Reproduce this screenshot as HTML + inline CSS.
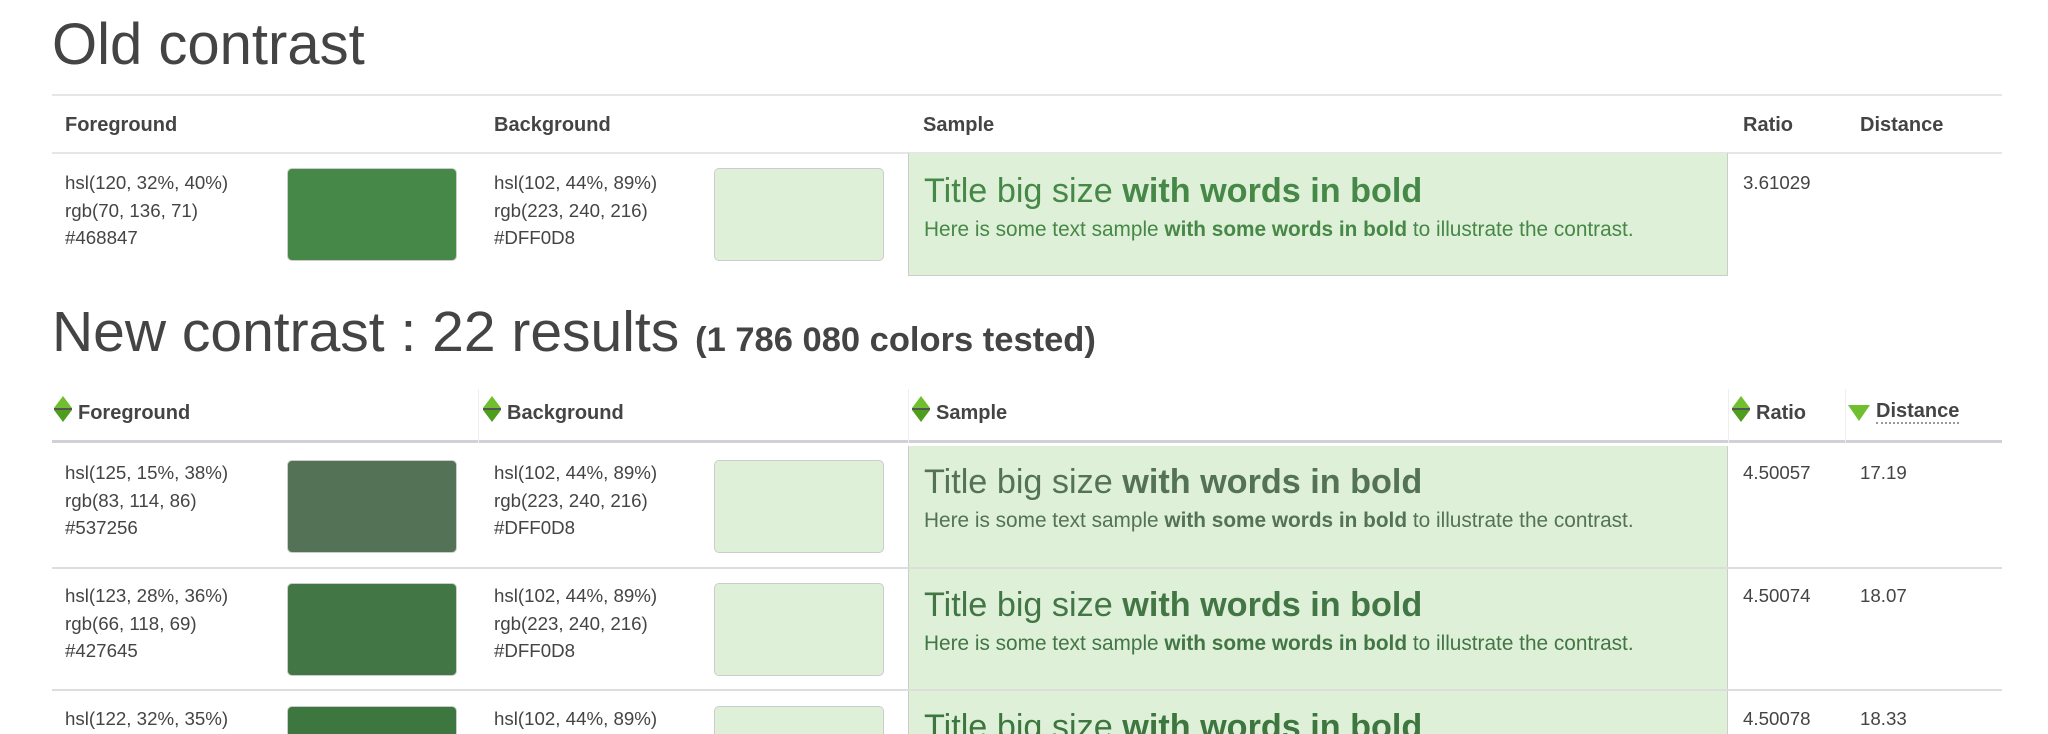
<!DOCTYPE html>
<html><head><meta charset="utf-8"><style>
*{margin:0;padding:0;box-sizing:border-box}
html{width:2048px;height:734px;overflow:hidden}
body{width:2048px;height:734px;overflow:hidden;background:#fff;font-family:"Liberation Sans",sans-serif;color:#444}
#w{position:relative;width:2048px;height:734px;overflow:hidden}
.a{position:absolute;white-space:nowrap}
h1{position:absolute;left:52px;font-size:58px;font-weight:normal;color:#444;white-space:nowrap;line-height:1.15}
.hl{position:absolute;left:52px;width:1950px;height:2px;background:#e6e6e6}
.th{position:absolute;font-size:20px;font-weight:bold;color:#444}
.td{position:absolute;font-size:18.7px;line-height:27.5px;color:#444}
.sw{position:absolute;width:170px;height:93px;border-radius:5px;border:1px solid #ccc}
.sample{position:absolute;left:908px;width:820px;background:#dff0d8;border:1px solid #ccc;border-top:none}
.sample .t{position:absolute;left:15px;top:19px;font-size:34.2px;white-space:nowrap}
.sample .s{position:absolute;left:15px;top:65px;font-size:20.8px;white-space:nowrap}
.ic{display:inline-block;vertical-align:-3px;margin-right:6px}
</style></head><body><div id="w">

<h1 style="top:12px">Old contrast</h1>
<div class="hl" style="top:94px"></div>
<div class="th" style="left:65px;top:114px">Foreground</div>
<div class="th" style="left:494px;top:114px">Background</div>
<div class="th" style="left:923px;top:114px">Sample</div>
<div class="th" style="left:1743px;top:114px">Ratio</div>
<div class="th" style="left:1860px;top:114px">Distance</div>
<div class="hl" style="top:152px"></div>

<div class="td" style="left:65px;top:169px">hsl(120, 32%, 40%)<br>rgb(70, 136, 71)<br>#468847</div>
<div class="sw" style="left:287px;top:168px;background:#468847"></div>
<div class="td" style="left:494px;top:169px">hsl(102, 44%, 89%)<br>rgb(223, 240, 216)<br>#DFF0D8</div>
<div class="sw" style="left:714px;top:168px;background:#dff0d8"></div>
<div class="sample" style="top:153px;height:123px;color:#468847"><div class="t">Title big size <b>with words in bold</b></div><div class="s">Here is some text sample <b>with some words in bold</b> to illustrate the contrast.</div></div>
<div class="td" style="left:1743px;top:169px">3.61029</div>

<h1 style="top:300px;font-size:57px">New contrast : 22 results <span style="font-size:34.5px;font-weight:bold">(1 786 080 colors tested)</span></h1>

<div class="a" style="left:52px;top:389px;width:1950px;height:54px;border-bottom:3px solid #d0d0d8"></div>
<div class="a" style="left:478px;top:389px;width:1px;height:54px;background:#eee"></div>
<div class="a" style="left:908px;top:389px;width:1px;height:54px;background:#eee"></div>
<div class="a" style="left:1728px;top:389px;width:1px;height:54px;background:#eee"></div>
<div class="a" style="left:1845px;top:389px;width:1px;height:54px;background:#eee"></div>

<svg width="0" height="0" style="position:absolute"><defs>
<g id="ud"><path d="M9 0 L18 12 L0 12Z" fill="#6fbf2f"/><path d="M0 14 L18 14 L9 26Z" fill="#4e9e1e"/><rect x="0" y="12" width="18" height="2" fill="#555"/></g>
</defs></svg>

<div class="th" style="left:54px;top:396px"><svg class="ic" width="18" height="26"><use href="#ud"/></svg>Foreground</div>
<div class="th" style="left:483px;top:396px"><svg class="ic" width="18" height="26"><use href="#ud"/></svg>Background</div>
<div class="th" style="left:912px;top:396px"><svg class="ic" width="18" height="26"><use href="#ud"/></svg>Sample</div>
<div class="th" style="left:1732px;top:396px"><svg class="ic" width="18" height="26"><use href="#ud"/></svg>Ratio</div>
<div class="th" style="left:1848px;top:400px"><svg class="ic" width="22" height="20" style="vertical-align:-4px"><path d="M0 4 L22 4 L11 20Z" fill="#6fbf2f"/></svg><span style="border-bottom:2px dotted #999">Distance</span></div>

<!-- row 1 -->
<div class="td" style="left:65px;top:459px">hsl(125, 15%, 38%)<br>rgb(83, 114, 86)<br>#537256</div>
<div class="sw" style="left:287px;top:460px;background:#537256"></div>
<div class="td" style="left:494px;top:459px">hsl(102, 44%, 89%)<br>rgb(223, 240, 216)<br>#DFF0D8</div>
<div class="sw" style="left:714px;top:460px;background:#dff0d8"></div>
<div class="sample" style="top:446px;height:122px;color:#537256;border-bottom:none"><div class="t" style="top:17px">Title big size <b>with words in bold</b></div><div class="s" style="top:63px">Here is some text sample <b>with some words in bold</b> to illustrate the contrast.</div></div>
<div class="td" style="left:1743px;top:459px">4.50057</div>
<div class="td" style="left:1860px;top:459px">17.19</div>
<div class="hl" style="top:567px;background:#ddd"></div>

<!-- row 2 -->
<div class="td" style="left:65px;top:582px">hsl(123, 28%, 36%)<br>rgb(66, 118, 69)<br>#427645</div>
<div class="sw" style="left:287px;top:583px;background:#427645"></div>
<div class="td" style="left:494px;top:582px">hsl(102, 44%, 89%)<br>rgb(223, 240, 216)<br>#DFF0D8</div>
<div class="sw" style="left:714px;top:583px;background:#dff0d8"></div>
<div class="sample" style="top:569px;height:121px;color:#427645;border-bottom:none"><div class="t" style="top:17px">Title big size <b>with words in bold</b></div><div class="s" style="top:63px">Here is some text sample <b>with some words in bold</b> to illustrate the contrast.</div></div>
<div class="td" style="left:1743px;top:582px">4.50074</div>
<div class="td" style="left:1860px;top:582px">18.07</div>
<div class="hl" style="top:689px;background:#ddd"></div>

<!-- row 3 -->
<div class="td" style="left:65px;top:705px">hsl(122, 32%, 35%)</div>
<div class="sw" style="left:287px;top:706px;height:28px;border-bottom:none;border-radius:5px 5px 0 0;background:#3d763f"></div>
<div class="td" style="left:494px;top:705px">hsl(102, 44%, 89%)</div>
<div class="sw" style="left:714px;top:706px;height:28px;border-bottom:none;border-radius:5px 5px 0 0;background:#dff0d8"></div>
<div class="sample" style="top:691px;height:43px;color:#3d763f;border-bottom:none;overflow:hidden"><div class="t" style="top:17px">Title big size <b>with words in bold</b></div></div>
<div class="td" style="left:1743px;top:705px">4.50078</div>
<div class="td" style="left:1860px;top:705px">18.33</div>

</div></body></html>
